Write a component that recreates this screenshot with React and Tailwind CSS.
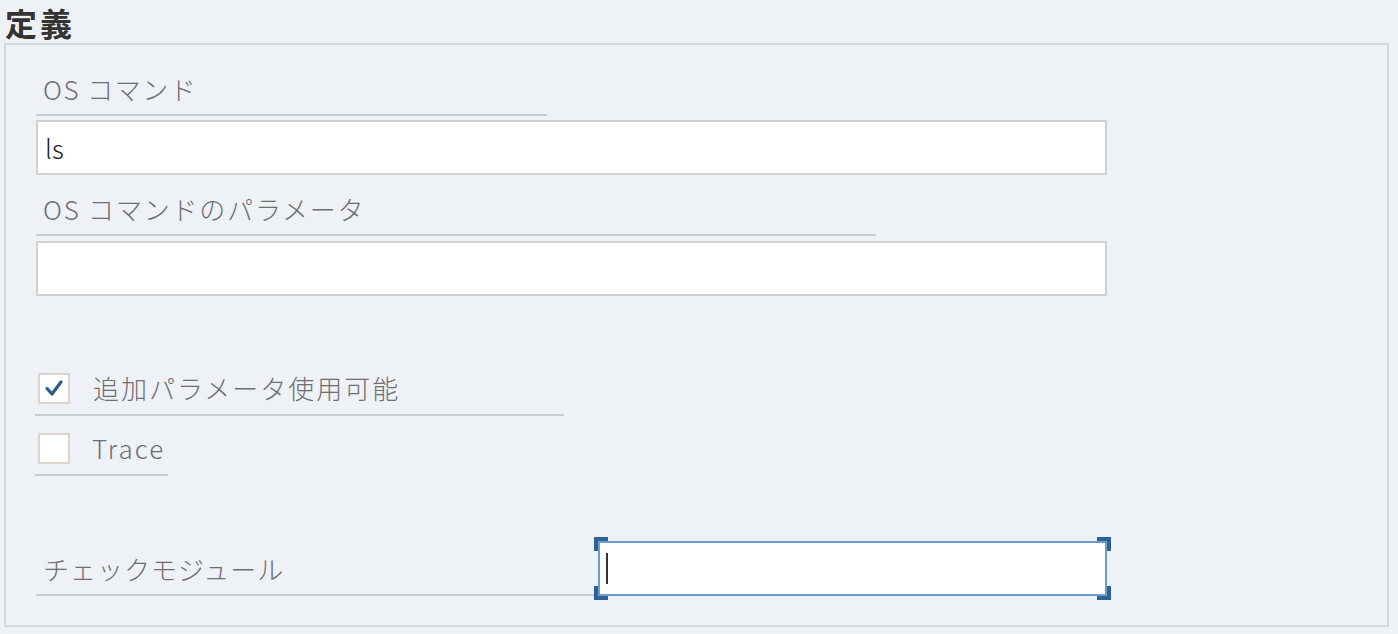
import React from "react";

const font = { fontFamily: '"Noto Sans CJK JP", "Noto Sans", sans-serif' };

function Check() {
  return (
    <svg width="20" height="18" viewBox="0 0 20 18" fill="none">
      <path d="M3 9.5 L8 15 L17 3" stroke="#2b5d8c" strokeWidth="3.2" strokeLinecap="round" strokeLinejoin="round" />
    </svg>
  );
}

export default function App() {
  return (
    <div className="w-[1398px] h-[634px] bg-[#eef2f7] overflow-hidden font-light" style={font}>
      <div className="h-[43px] flex items-center pl-[5px] text-[32px] font-bold text-[#333333] tracking-[3px] leading-[40px]">
        定義
      </div>
      <div className="ml-[4px] w-[1385px] border-2 border-[#d4d7dc] pl-[30px] pb-[29px] text-[#6e6e6e] text-[26px] leading-none">
        <div className="mt-[23px] w-[511px] h-[48px] pb-[4px] pl-[7px] flex items-center border-b-2 border-[#c9cbce] tracking-[1.5px]">
          OS コマンド
        </div>
        <div className="mt-[4px] w-[1071px] h-[55px] bg-white border-2 border-[#cfd0d2] flex items-center pl-[7px] text-[#222222]">
          ls
        </div>
        <div className="mt-[13px] w-[840px] h-[48px] pb-[4px] pl-[7px] flex items-center border-b-2 border-[#c9cbce] tracking-[1.8px]">
          OS コマンドのパラメータ
        </div>
        <div className="mt-[5px] w-[1071px] h-[55px] bg-white border-2 border-[#cfd0d2]"></div>

        <div className="mt-[70px] -ml-[1px] w-[529px] h-[50px] pb-[4px] flex items-center border-b-2 border-[#c9cbce]">
          <div className="ml-[3px] w-[32px] h-[31px] bg-white border-2 border-[#ddd3cc] flex items-center justify-center">
            <Check />
          </div>
          <span className="ml-[23px] tracking-[2px]">追加パラメータ使用可能</span>
        </div>
        <div className="mt-[10px] -ml-[1px] w-[133px] h-[50px] pb-[4px] flex items-center border-b-2 border-[#c9cbce]">
          <div className="ml-[3px] w-[32px] h-[31px] bg-white border-2 border-[#ddd3cc]"></div>
          <span className="ml-[22px] tracking-[2px]">Trace</span>
        </div>

        <div className="mt-[65px] flex items-end">
          <div className="w-[562px] h-[48px] pb-[4px] pl-[7px] flex items-center border-b-2 border-[#c9cbce] tracking-[1px]">
            チェックモジュール
          </div>
          <div className="relative w-[509px] h-[55px] bg-white border-2 border-[#6d9ccc] flex items-center pl-[6px]">
            <div className="w-[2px] h-[31px] bg-[#333333]"></div>
            <div className="absolute -left-[6px] -top-[6px] w-[14px] h-[14px] border-l-4 border-t-4 border-[#2e6296]"></div>
            <div className="absolute -right-[6px] -top-[6px] w-[14px] h-[14px] border-r-4 border-t-4 border-[#2e6296]"></div>
            <div className="absolute -left-[6px] -bottom-[6px] w-[14px] h-[14px] border-l-4 border-b-4 border-[#2e6296]"></div>
            <div className="absolute -right-[6px] -bottom-[6px] w-[14px] h-[14px] border-r-4 border-b-4 border-[#2e6296]"></div>
          </div>
        </div>
      </div>
    </div>
  );
}
